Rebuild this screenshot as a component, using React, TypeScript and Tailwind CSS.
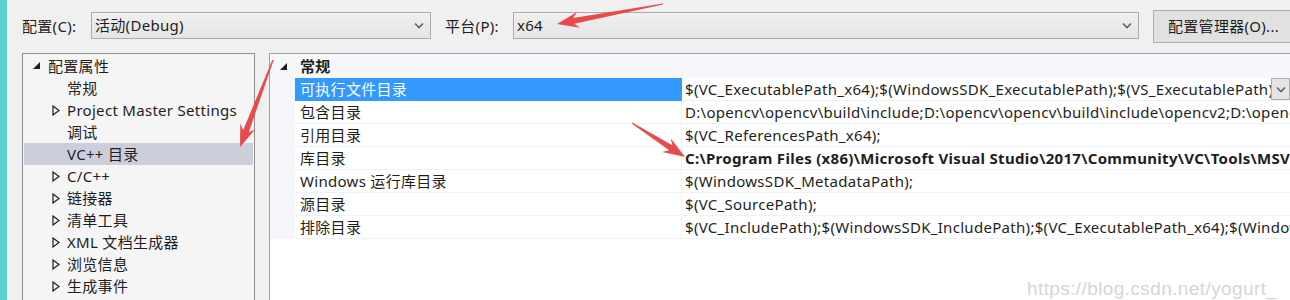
import React from "react";

const FONT = { fontFamily: '"Noto Sans", "Noto Sans CJK SC", sans-serif' };

function Chevron({ className = "" }: { className?: string }) {
  return (
    <svg width="10" height="7" viewBox="0 0 10 7" className={className}>
      <path d="M1 1.5 L5 5.5 L9 1.5" fill="none" stroke="#606060" strokeWidth="1.6" />
    </svg>
  );
}

function Expanded() {
  return (
    <svg width="8" height="8" viewBox="0 0 8 8">
      <path d="M7 0 L7 7 L0 7 Z" fill="#1e1e1e" />
    </svg>
  );
}

function Collapsed() {
  return (
    <svg width="8" height="11" viewBox="0 0 8 11">
      <path d="M1 1 L7 5.5 L1 10 Z" fill="none" stroke="#1e1e1e" strokeWidth="1.2" strokeLinejoin="miter" />
    </svg>
  );
}

function arrowPoints(tx: number, ty: number, px: number, py: number) {
  const dx = px - tx;
  const dy = py - ty;
  const len = Math.hypot(dx, dy);
  const ux = dx / len;
  const uy = dy / len;
  const nx = -uy;
  const ny = ux;
  const headLen = 22;
  const headHalf = 8;
  const neckHalf = 3;
  const tailHalf = 0.6;
  const bx = px - ux * headLen;
  const by = py - uy * headLen;
  const nbx = px - ux * (headLen - 5);
  const nby = py - uy * (headLen - 5);
  const pts = [
    [tx + nx * tailHalf, ty + ny * tailHalf],
    [nbx + nx * neckHalf, nby + ny * neckHalf],
    [bx + nx * headHalf, by + ny * headHalf],
    [px, py],
    [bx - nx * headHalf, by - ny * headHalf],
    [nbx - nx * neckHalf, nby - ny * neckHalf],
    [tx - nx * tailHalf, ty - ny * tailHalf],
  ];
  return pts.map((p) => p.map((v) => v.toFixed(1)).join(",")).join(" ");
}

const treeItems: { label: string; level: 0 | 1; kind: "exp" | "col" | "none"; selected?: boolean }[] = [
  { label: "配置属性", level: 0, kind: "exp" },
  { label: "常规", level: 1, kind: "none" },
  { label: "Project Master Settings", level: 1, kind: "col" },
  { label: "调试", level: 1, kind: "none" },
  { label: "VC++ 目录", level: 1, kind: "none", selected: true },
  { label: "C/C++", level: 1, kind: "col" },
  { label: "链接器", level: 1, kind: "col" },
  { label: "清单工具", level: 1, kind: "col" },
  { label: "XML 文档生成器", level: 1, kind: "col" },
  { label: "浏览信息", level: 1, kind: "col" },
  { label: "生成事件", level: 1, kind: "col" },
];

const rows: { name: string; value: string; bold?: boolean; selected?: boolean }[] = [
  {
    name: "可执行文件目录",
    value: "$(VC_ExecutablePath_x64);$(WindowsSDK_ExecutablePath);$(VS_ExecutablePath)",
    selected: true,
  },
  {
    name: "包含目录",
    value: "D:\\opencv\\opencv\\build\\include;D:\\opencv\\opencv\\build\\include\\opencv2;D:\\opencv",
  },
  { name: "引用目录", value: "$(VC_ReferencesPath_x64);" },
  {
    name: "库目录",
    value: "C:\\Program Files (x86)\\Microsoft Visual Studio\\2017\\Community\\VC\\Tools\\MSVC",
    bold: true,
  },
  { name: "Windows 运行库目录", value: "$(WindowsSDK_MetadataPath);" },
  { name: "源目录", value: "$(VC_SourcePath);" },
  {
    name: "排除目录",
    value: "$(VC_IncludePath);$(WindowsSDK_IncludePath);$(VC_ExecutablePath_x64);$(Windows",
  },
];

export default function App() {
  return (
    <div
      className="relative w-[1290px] h-[300px] overflow-hidden flex bg-[#f0f0f0] text-[#1e1e1e] tracking-[0.3px]"
      style={FONT}
    >
      <div className="w-[7px] h-full bg-[#5ccfcf] shrink-0" />
      <div className="flex-1 flex flex-col min-w-0">
        {/* top toolbar */}
        <div className="h-[53px] shrink-0 flex items-start pl-[15px] text-[15px] overflow-hidden">
          <div className="w-[69px] shrink-0 h-[53px] flex items-center pb-[1px]">配置(C):</div>
          <div className="mt-[12px] w-[340px] shrink-0 h-[27px] border border-[#acacac] bg-gradient-to-b from-[#f0f0f0] to-[#e5e5e5] flex items-center pl-[3px] pr-[6px] justify-between">
            <span>活动(Debug)</span>
            <Chevron />
          </div>
          <div className="ml-[14px] w-[68px] shrink-0 h-[53px] flex items-center pb-[1px]">平台(P):</div>
          <div className="mt-[12px] w-[626px] shrink-0 h-[27px] border border-[#acacac] bg-gradient-to-b from-[#f0f0f0] to-[#e5e5e5] flex items-center pl-[3px] pr-[6px] justify-between">
            <span>x64</span>
            <Chevron />
          </div>
          <div className="mt-[10px] ml-[14px] w-[150px] h-[33px] shrink-0 border border-[#adadad] bg-[#e1e1e1] flex items-center pl-[14px]">
            配置管理器(O)...
          </div>
        </div>

        {/* panels */}
        <div className="flex-1 flex items-start pl-[15px] gap-[14px] min-h-0">
          {/* tree */}
          <div className="w-[233px] h-[260px] shrink-0 border border-[#8e8f8f] bg-[#f5f5f5] p-[1px] text-[15px]">
            {treeItems.map((it, i) => (
              <div
                key={i}
                className={`h-[22px] flex items-center ${it.selected ? "bg-[#cccedb]" : ""}`}
              >
                <div
                  className={`flex items-center justify-center w-[10px] ${
                    it.level === 0 ? "ml-[8px] mr-[6px]" : "ml-[27px] mr-[6px]"
                  }`}
                >
                  {it.kind === "exp" && <Expanded />}
                  {it.kind === "col" && <Collapsed />}
                </div>
                <span className="whitespace-nowrap leading-none">{it.label}</span>
              </div>
            ))}
          </div>

          {/* property grid */}
          <div className="flex-1 h-[260px] border-l border-t border-[#a0a0a0] bg-white text-[15px] min-w-0 overflow-hidden">
            <div className="h-[24px] flex items-center bg-[#f5f7fa]">
              <div className="w-[25px] flex justify-center pl-[2px] pt-[1px]">
                <Expanded />
              </div>
              <span className="font-bold pl-[5px] leading-none">常规</span>
            </div>
            {rows.map((r, i) => (
              <div key={i} className="h-[23px] flex">
                <div className="w-[25px] shrink-0 bg-[#f5f7fa]" />
                <div
                  className={`w-[387px] shrink-0 flex items-center pl-[5px] border-b border-r ${
                    r.selected ? "bg-[#3399ff] text-white border-[#3399ff]" : "border-[#eef1f6]"
                  }`}
                >
                  <span className="whitespace-nowrap leading-none">{r.name}</span>
                </div>
                <div className="flex-1 min-w-0 flex items-center pl-[3px] border-b border-[#eef1f6] relative overflow-hidden">
                  <span className={`whitespace-nowrap leading-none ${r.bold ? "font-bold" : ""}`}>{r.value}</span>
                  {r.selected && (
                    <div className="absolute right-0 top-0 w-[19px] h-[22px] border border-[#acacac] bg-[#e5e5e5] flex items-center justify-center">
                      <Chevron />
                    </div>
                  )}
                </div>
              </div>
            ))}
          </div>
        </div>
      </div>

      {/* annotation arrows */}
      <svg className="absolute left-0 top-0 pointer-events-none" width="1290" height="300">
        <polygon points={arrowPoints(663, 4, 557, 24)} fill="#e84b4b" />
        <polygon points={arrowPoints(273, 60, 240, 147)} fill="#e84b4b" />
        <polygon points={arrowPoints(632, 123, 685, 157)} fill="#e84b4b" />
      </svg>

      {/* watermark */}
      <div
        className="absolute left-[1027px] top-[275px] text-[19px] tracking-[0.4px] text-[#d6d6d6] whitespace-nowrap"
        style={{ fontFamily: '"Liberation Sans", Arial, sans-serif' }}
      >
        https://blog.csdn.net/yogurt_
      </div>
    </div>
  );
}
